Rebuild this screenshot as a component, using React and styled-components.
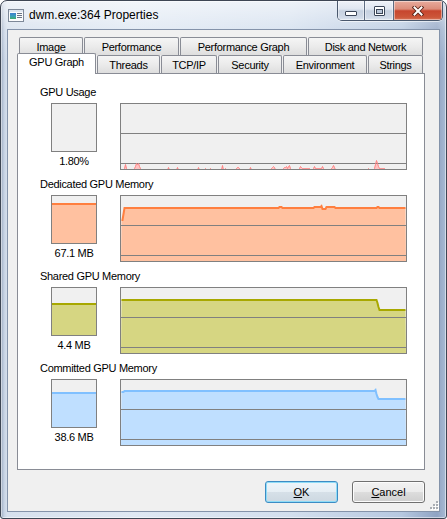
import React from "react";
import styled, { createGlobalStyle } from "styled-components";

const UI_FONT = `"Liberation Sans", Arial, sans-serif`;
const TITLE_FONT = `"Liberation Sans", Arial, sans-serif`;

const GRAPH_W = 285;
const GRAPH_H = 65;

const GlobalStyle = createGlobalStyle`
  *, *::before, *::after { box-sizing: border-box; }
  html, body { margin: 0; padding: 0; }
  body {
    width: 447px;
    height: 519px;
    overflow: hidden;
    background: #ffffff;
    font-family: ${UI_FONT};
  }
`;

const Window = styled.div`
  width: 447px;
  height: 519px;
  display: flex;
  flex-direction: column;
  border: 1px solid #3e4654;
  border-radius: 7px 7px 3px 3px;
  padding: 0 6px 6px 6px;
  overflow: hidden;
  background:
    linear-gradient(180deg, rgba(255,255,255,0.6) 0px, rgba(255,255,255,0.2) 28px, rgba(255,255,255,0) 60px),
    linear-gradient(90deg, #98a8bf 0px, #c6d2e3 3px, #d6e0ed 6px, #dfe8f3 30%, #d3dfee 65%, #b6c8e0 90%, #8fa3c3 98%, #a9bbd4 100%);
  box-shadow: inset 0 0 0 1px rgba(255,255,255,0.5);
`;

const TitleBar = styled.div`
  height: 28px;
  flex: none;
  display: flex;
  align-items: flex-start;
`;

const AppIcon = styled.svg`
  display: block;
  flex: none;
  margin: 8px 0 0 1px;
`;

const TitleText = styled.div`
  margin: 6px 0 0 5px;
  font-family: ${TITLE_FONT};
  font-size: 12px;
  line-height: 16px;
  color: #000;
  white-space: nowrap;
  text-shadow: 0 0 6px rgba(255,255,255,0.9);
`;

const Spacer = styled.div`
  flex: 1;
`;

const CaptionGroup = styled.div`
  display: flex;
  height: 20px;
  margin-right: -3px;
  border: 1px solid #4a586d;
  border-top: none;
  border-radius: 0 0 5px 5px;
  overflow: hidden;
  box-shadow: 0 1px 0 rgba(255,255,255,0.6);
`;

const CaptionButton = styled.div`
  width: ${(p) => p.$w}px;
  display: flex;
  align-items: center;
  justify-content: center;
  background: ${(p) =>
    p.$close
      ? "linear-gradient(180deg, #e8ab9d 0%, #dc8d7b 42%, #c7462e 52%, #cc5639 85%, #d8785c 100%)"
      : "linear-gradient(180deg, #eef2f8 0%, #dfe6f0 42%, #c6d1e0 52%, #cfd9e7 85%, #dde5ef 100%)"};
  box-shadow: inset 0 0 0 1px rgba(255,255,255,0.45);
  & + & {
    border-left: 1px solid #5d6c82;
  }
`;

const Client = styled.div`
  position: relative;
  flex: 1;
  display: flex;
  flex-direction: column;
  background: #f0f0f0;
  border: 1px solid #8493aa;
  padding: 7px 14px 0 9px;
  font-size: 11px;
  letter-spacing: -0.3px;
  color: #000;
`;

const TabRow = styled.div`
  display: flex;
  align-items: flex-end;
  gap: 1px;
  height: 18px;
  padding-left: ${(p) => p.$indent}px;
`;

const Tab = styled.div`
  width: ${(p) => p.$w}px;
  height: ${(p) => (p.$active ? 21 : 18)}px;
  margin-bottom: ${(p) => (p.$active ? -1 : 0)}px;
  position: ${(p) => (p.$active ? "relative" : "static")};
  z-index: ${(p) => (p.$active ? 2 : "auto")};
  border: 1px solid #898c95;
  border-bottom: none;
  border-radius: 2px 2px 0 0;
  background: ${(p) =>
    p.$active ? "#ffffff" : "linear-gradient(180deg, #f5f5f5 0%, #ebebeb 50%, #dedede 100%)"};
  text-align: center;
  white-space: nowrap;
  line-height: 16px;
  padding-top: ${(p) => (p.$active ? 0 : 1)}px;
`;

const Pane = styled.div`
  width: 408px;
  height: 397px;
  background: #ffffff;
  border: 1px solid #898c95;
  padding-top: 10px;
  display: flex;
  flex-direction: column;
  gap: 6px;
`;

const Section = styled.section`
  display: flex;
  flex-direction: column;
`;

const SectionLabel = styled.div`
  padding-left: 22px;
  height: 16px;
  line-height: 16px;
  white-space: nowrap;
`;

const SectionBody = styled.div`
  display: flex;
  margin-top: 3px;
  height: 67px;
`;

const GaugeCol = styled.div`
  margin-left: 33px;
  width: 46px;
  display: flex;
  flex-direction: column;
  align-items: center;
`;

const Gauge = styled.div`
  width: 46px;
  height: 49px;
  flex: none;
  border: 1px solid #808080;
  background: #f0f0f0;
  display: flex;
  flex-direction: column;
  justify-content: flex-end;
`;

const GaugeFill = styled.div`
  background: ${(p) => p.$fill};
  border-top: 2px solid ${(p) => p.$line};
`;

const GaugeValue = styled.div`
  margin-top: 2px;
  line-height: 14px;
  white-space: nowrap;
`;

const GraphFrame = styled.div`
  margin-left: 23px;
  width: 287px;
  height: 67px;
  border: 1px solid #808080;
  background: #f0f0f0;
`;

const GraphSvg = styled.svg`
  display: block;
`;

const ButtonRow = styled.div`
  display: flex;
  justify-content: flex-end;
  gap: 14px;
  margin-top: 11px;
`;

const DialogButton = styled.button`
  width: 73px;
  height: 22px;
  padding: 0;
  font-family: ${UI_FONT};
  font-size: 11px;
  color: #000;
  border: 1px solid ${(p) => (p.$default ? "#3c8cc4" : "#707070")};
  border-radius: 3px;
  background: ${(p) =>
    p.$default
      ? "linear-gradient(180deg, #eef5fa 0%, #e6eef4 50%, #d6e0e8 51%, #cdd8e1 100%)"
      : "linear-gradient(180deg, #f2f2f2 0%, #ebebeb 50%, #dddddd 51%, #cfcfcf 100%)"};
  box-shadow: inset 0 0 0 1px ${(p) => (p.$default ? "#8fdcf7" : "#fcfcfc")};
  u {
    text-decoration: underline;
    text-underline-offset: 1px;
  }
`;

const Grip = styled.svg`
  position: absolute;
  right: 0;
  bottom: 0;
  display: block;
`;

/* ---------- data ---------- */

function series(base, overrides) {
  const arr = Array(GRAPH_W).fill(base);
  overrides.forEach(([from, to, v]) => {
    for (let i = from; i <= to; i++) arr[i] = v;
  });
  return arr;
}

const gpuHeights = (() => {
  const h = Array(GRAPH_W).fill(0);
  const spikes = [
    [4, 5], [3, 1], [5, 1],
    [13, 1], [14, 3], [15, 6], [16, 5], [17, 6], [18, 3], [19, 1],
    [47, 2], [56, 2], [77, 2], [84, 1], [89, 1], [101, 4], [104, 1],
    [115, 1], [116, 2], [117, 2], [118, 1], [129, 2],
    [150, 1], [151, 2], [152, 3], [153, 2],
    [162, 1], [163, 2], [164, 2], [165, 3], [166, 1], [167, 3], [168, 4], [169, 1],
    [178, 1], [179, 3], [180, 2], [181, 1], [182, 1], [183, 1], [184, 1], [185, 1], [186, 1], [187, 1], [188, 1],
    [192, 1], [193, 3], [194, 1], [195, 1], [196, 1], [197, 1], [198, 1], [199, 1], [200, 1], [201, 3], [202, 1],
    [210, 1], [211, 2], [212, 4], [213, 2],
    [247, 1],
    [253, 1], [254, 5], [255, 9], [256, 6], [257, 3], [258, 1],
    [259, 1], [260, 1], [261, 1], [262, 1], [263, 1],
  ];
  spikes.forEach(([x, v]) => (h[x] = v));
  return h;
})();

const gpuValues = gpuHeights.map((v) => (v === 0 ? GRAPH_H + 1 : GRAPH_H - v + 0.5));

const dedicatedValues = series(12, [
  [0, 1, 24],
  [2, 2, 18],
  [158, 160, 11],
  [193, 199, 11],
  [200, 200, 10],
  [201, 204, 13],
  [205, 213, 11],
  [256, 257, 11],
]);

const sharedValues = series(12, [
  [256, 256, 15],
  [257, 257, 19],
  [258, 284, 22],
]);

const committedValues = series(11, [
  [0, 2, 12],
  [254, 254, 10],
  [255, 255, 14],
  [256, 256, 17],
  [257, 284, 19],
]);

const sections = [
  {
    label: "GPU Usage",
    value: "1.80%",
    gauge: 0,
    fill: "#ffc4c4",
    line: "#ff8080",
    stroke: 1,
    values: gpuValues,
  },
  {
    label: "Dedicated GPU Memory",
    value: "67.1 MB",
    gauge: 40,
    fill: "#ffc1a0",
    line: "#ff7f3f",
    stroke: 2,
    values: dedicatedValues,
  },
  {
    label: "Shared GPU Memory",
    value: "4.4 MB",
    gauge: 32,
    fill: "#d6d682",
    line: "#a8a800",
    stroke: 2,
    values: sharedValues,
  },
  {
    label: "Committed GPU Memory",
    value: "38.6 MB",
    gauge: 35,
    fill: "#bfdfff",
    line: "#80c0ff",
    stroke: 2,
    values: committedValues,
  },
];

const topTabs = [
  { label: "Image", w: 64 },
  { label: "Performance", w: 95 },
  { label: "Performance Graph", w: 127 },
  { label: "Disk and Network", w: 115 },
];

const bottomTabs = [
  { label: "GPU Graph", w: 79, active: true },
  { label: "Threads", w: 63 },
  { label: "TCP/IP", w: 56 },
  { label: "Security", w: 64 },
  { label: "Environment", w: 84 },
  { label: "Strings", w: 55 },
];

/* ---------- parts ---------- */

function Graph({ values, fill, line, stroke }) {
  const pts = values.map((y, i) => `${i + 0.5},${y}`).join(" ");
  const area = `0,${GRAPH_H + 2} ${pts} ${GRAPH_W},${GRAPH_H + 2}`;
  return (
    <GraphFrame>
      <GraphSvg width={GRAPH_W} height={GRAPH_H} viewBox={`0 0 ${GRAPH_W} ${GRAPH_H}`}>
        <polygon points={area} fill={fill} />
        <line x1="0" x2={GRAPH_W} y1="29.5" y2="29.5" stroke="#808080" strokeWidth="1" />
        <line x1="0" x2={GRAPH_W} y1="59.5" y2="59.5" stroke="#808080" strokeWidth="1" />
        <polyline points={pts} fill="none" stroke={line} strokeWidth={stroke} strokeLinejoin="miter" />
      </GraphSvg>
    </GraphFrame>
  );
}

function WindowIcon() {
  return (
    <AppIcon width="16" height="13" viewBox="0 0 16 13">
      <defs>
        <linearGradient id="iconSq" x1="0" y1="0" x2="0" y2="1">
          <stop offset="0" stopColor="#3f7fd0" />
          <stop offset="0.55" stopColor="#3aa0b8" />
          <stop offset="1" stopColor="#3fae6a" />
        </linearGradient>
      </defs>
      <rect x="0.5" y="0.5" width="15" height="12" fill="#fbfcfd" stroke="#7d8898" />
      <rect x="1" y="1" width="14" height="2" fill="#dfe6ef" />
      <rect x="2" y="4" width="6" height="6" fill="url(#iconSq)" />
      <rect x="9" y="4" width="5" height="1" fill="#6a7484" />
      <rect x="9" y="6" width="5" height="1" fill="#6a7484" />
      <rect x="9" y="8" width="5" height="1" fill="#6a7484" />
    </AppIcon>
  );
}

function MinGlyph() {
  return (
    <svg width="12" height="6" viewBox="0 0 12 6" style={{ marginTop: 6 }}>
      <rect x="0.5" y="0.5" width="11" height="4" rx="0.5" fill="#ffffff" stroke="#3b4658" />
    </svg>
  );
}

function MaxGlyph() {
  return (
    <svg width="11" height="10" viewBox="0 0 11 10">
      <rect x="0.5" y="0.5" width="10" height="9" rx="0.5" fill="#ffffff" stroke="#3b4658" />
      <rect x="2.5" y="3.5" width="6" height="4" fill="#b9c6d8" stroke="#3b4658" />
    </svg>
  );
}

function CloseGlyph() {
  return (
    <svg width="12" height="10" viewBox="0 0 12 10">
      <path d="M2.5 1.5 L9.5 8.5 M9.5 1.5 L2.5 8.5" stroke="#5a2418" strokeWidth="3.8" strokeLinecap="square" />
      <path d="M2.5 1.5 L9.5 8.5 M9.5 1.5 L2.5 8.5" stroke="#ffffff" strokeWidth="2" strokeLinecap="square" />
    </svg>
  );
}

function GripGlyph() {
  const dots = [
    [9, 1], [6, 4], [9, 4], [3, 7], [6, 7], [9, 7],
  ];
  return (
    <Grip width="12" height="11" viewBox="0 0 12 11">
      {dots.map(([x, y], i) => (
        <g key={i}>
          <rect x={x + 1} y={y + 1} width="2" height="2" fill="#ffffff" />
          <rect x={x} y={y} width="2" height="2" fill="#a9adb3" />
        </g>
      ))}
    </Grip>
  );
}

export default function App() {
  return (
    <>
      <GlobalStyle />
      <Window>
        <TitleBar>
          <WindowIcon />
          <TitleText>dwm.exe:364 Properties</TitleText>
          <Spacer />
          <CaptionGroup>
            <CaptionButton $w={26}>
              <MinGlyph />
            </CaptionButton>
            <CaptionButton $w={29}>
              <MaxGlyph />
            </CaptionButton>
            <CaptionButton $w={49} $close>
              <CloseGlyph />
            </CaptionButton>
          </CaptionGroup>
        </TitleBar>
        <Client>
          <TabRow $indent={2}>
            {topTabs.map((t) => (
              <Tab key={t.label} $w={t.w}>
                {t.label}
              </Tab>
            ))}
          </TabRow>
          <TabRow $indent={0}>
            {bottomTabs.map((t) => (
              <Tab key={t.label} $w={t.w} $active={t.active}>
                {t.label}
              </Tab>
            ))}
          </TabRow>
          <Pane>
            {sections.map((s) => (
              <Section key={s.label}>
                <SectionLabel>{s.label}</SectionLabel>
                <SectionBody>
                  <GaugeCol>
                    <Gauge>
                      {s.gauge > 0 && (
                        <GaugeFill $fill={s.fill} $line={s.line} style={{ height: s.gauge }} />
                      )}
                    </Gauge>
                    <GaugeValue>{s.value}</GaugeValue>
                  </GaugeCol>
                  <Graph values={s.values} fill={s.fill} line={s.line} stroke={s.stroke} />
                </SectionBody>
              </Section>
            ))}
          </Pane>
          <ButtonRow>
            <DialogButton $default>
              <u>O</u>K
            </DialogButton>
            <DialogButton>
              <u>C</u>ancel
            </DialogButton>
          </ButtonRow>
          <GripGlyph />
        </Client>
      </Window>
    </>
  );
}
